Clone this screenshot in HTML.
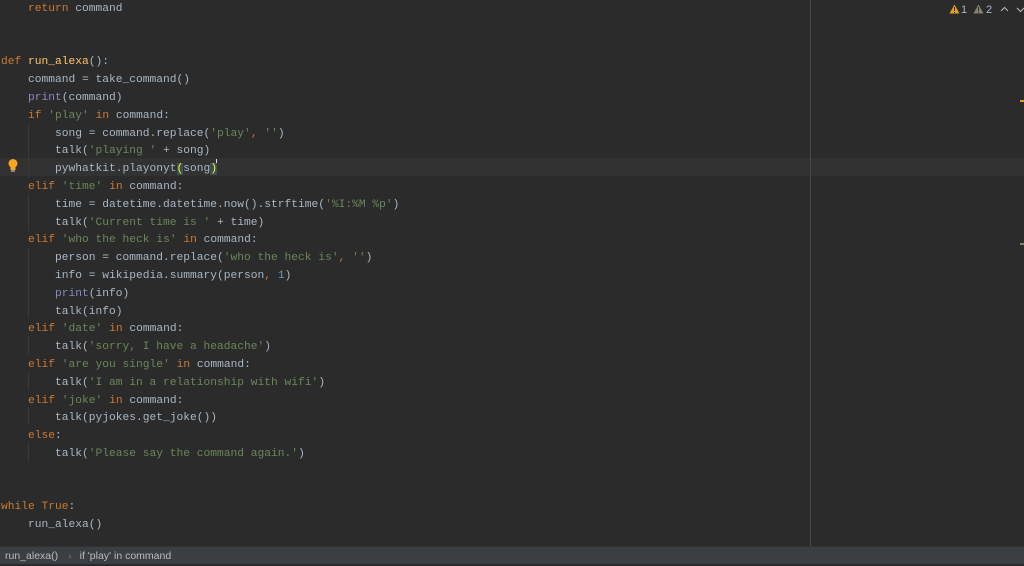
<!DOCTYPE html>
<html><head><style>
body{margin:0;width:1024px;height:563px;background:#2b2b2b;overflow:hidden;position:relative;font-family:"Liberation Mono",monospace;}
.cur{position:absolute;left:0;top:158px;width:1024px;height:18px;background:#323232;}
.margin{position:absolute;left:810px;top:0;width:1px;height:546px;background:#4a4a4a;}
pre{position:absolute;left:1px;top:1px;margin:0;font-size:11.25px;line-height:17.8px;color:#a9b7c6;font-family:"Liberation Mono",monospace;}
.k{color:#cc7832}.s{color:#6a8759}.n{color:#6897bb}.b{color:#8888c6}.f{color:#ffc66d}
.guide{position:absolute;left:28px;width:1px;background:#393939;}
.status{position:absolute;left:0;top:546px;width:1024px;height:17px;background:#3c3f41;border-top:1px solid #323232;font-family:"Liberation Sans",sans-serif;font-size:10.5px;color:#bbbbbb;line-height:19px;}
.warn{position:absolute;top:4px;font-family:"Liberation Sans",sans-serif;font-size:11px;color:#a9b7c6;}
</style></head><body>
<div class="cur"></div>
<div class="margin"></div>
<div class="guide" style="top:124px;height:54px"></div>
<div class="guide" style="top:195px;height:36px"></div>
<div class="guide" style="top:248px;height:70px"></div>
<div class="guide" style="top:336px;height:18px"></div>
<div class="guide" style="top:372px;height:18px"></div>
<div class="guide" style="top:407px;height:18px"></div>
<div class="guide" style="top:443px;height:18px"></div>
<svg style="position:absolute;left:7px;top:158px" width="12" height="15"><circle cx="6" cy="5.5" r="4.5" fill="#f5a623"/><rect x="3.5" y="9" width="5" height="3" fill="#f5a623"/><rect x="4" y="12" width="4" height="2" fill="#888"/></svg>
<div style="position:absolute;left:216px;top:159px;width:1px;height:16px;background:#ddd"></div>
<pre>    <span class="k">return</span> command


<span class="k">def</span> <span class="f">run_alexa</span>():
    command = take_command()
    <span class="b">print</span>(command)
    <span class="k">if</span> <span class="s">'play'</span> <span class="k">in</span> command:
        song = command.replace(<span class="s">'play'</span><span class="k">,</span> <span class="s">''</span>)
        talk(<span class="s">'playing '</span> + song)
        pywhatkit.playonyt<span style="background:#3b514d;color:#ffef28">(</span>song<span style="background:#3b514d;color:#ffef28">)</span>
    <span class="k">elif</span> <span class="s">'time'</span> <span class="k">in</span> command:
        time = datetime.datetime.now().strftime(<span class="s">'%I:%M %p'</span>)
        talk(<span class="s">'Current time is '</span> + time)
    <span class="k">elif</span> <span class="s">'who the heck is'</span> <span class="k">in</span> command:
        person = command.replace(<span class="s">'who the heck is'</span><span class="k">,</span> <span class="s">''</span>)
        info = wikipedia.summary(person<span class="k">,</span> <span class="n">1</span>)
        <span class="b">print</span>(info)
        talk(info)
    <span class="k">elif</span> <span class="s">'date'</span> <span class="k">in</span> command:
        talk(<span class="s">'sorry, I have a headache'</span>)
    <span class="k">elif</span> <span class="s">'are you single'</span> <span class="k">in</span> command:
        talk(<span class="s">'I am in a relationship with wifi'</span>)
    <span class="k">elif</span> <span class="s">'joke'</span> <span class="k">in</span> command:
        talk(pyjokes.get_joke())
    <span class="k">else</span>:
        talk(<span class="s">'Please say the command again.'</span>)


<span class="k">while</span> <span class="k">True</span>:
    run_alexa()</pre>
<svg style="position:absolute;left:949px;top:4px" width="11" height="10"><path d="M5.5 0.5L10.5 9.5H0.5Z" fill="#e4a11b"/><rect x="5" y="3" width="1" height="4" fill="#2b2b2b"/><rect x="5" y="8" width="1" height="1" fill="#2b2b2b"/></svg>
<div class="warn" style="left:961px">1</div>
<svg style="position:absolute;left:973px;top:4px" width="11" height="10"><path d="M5.5 0.5L10.5 9.5H0.5Z" fill="#8a8270"/><rect x="5" y="3" width="1" height="4" fill="#2b2b2b"/><rect x="5" y="8" width="1" height="1" fill="#2b2b2b"/></svg>
<div class="warn" style="left:986px">2</div>
<svg style="position:absolute;left:1000px;top:6px" width="24" height="8"><path d="M1 5L4.5 1.5L8 5" stroke="#bbb" fill="none"/><path d="M17 2L20.5 5.5L24 2" stroke="#bbb" fill="none"/></svg>
<div style="position:absolute;left:1020px;top:100px;width:4px;height:2px;background:#e4a11b"></div>
<div style="position:absolute;left:1020px;top:243px;width:4px;height:2px;background:#8a8270"></div>
<div class="status"><span style="margin-left:5px">run_alexa()</span><span style="margin-left:10px;color:#777">›</span><span style="margin-left:8px">if 'play' in command</span></div>
</body></html>
